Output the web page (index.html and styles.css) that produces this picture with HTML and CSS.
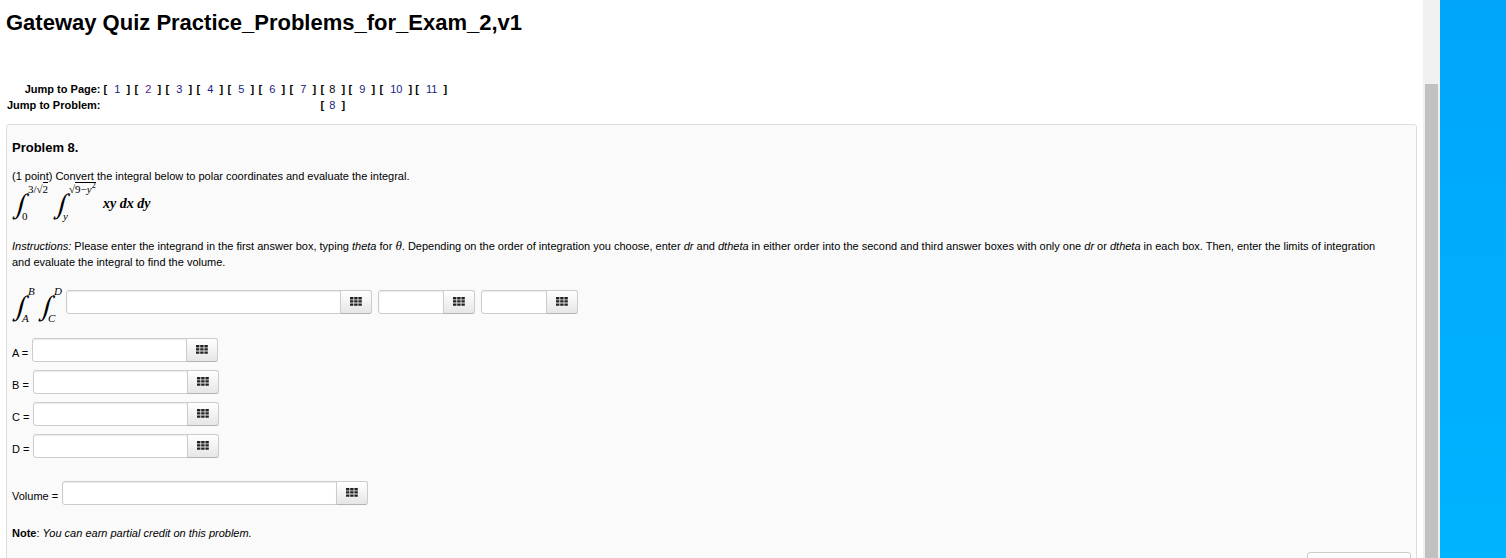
FILE: index.html
```
<!DOCTYPE html>
<html lang="en">

<head>
    <meta charset="UTF-8">
    <meta name="viewport" content="width=device-width, initial-scale=1.0">
    <title>Gateway Quiz Practice_Problems_for_Exam_2,v1</title>
    <link rel="stylesheet" href="styles.css">
</head>

<body>
    <!-- keypad icon shared by all the answer buttons -->
    <svg class="sprite" aria-hidden="true">
        <symbol id="grid" viewBox="0 0 12 9">
            <path d="M0 0h3.4v2.4H0zM4.2 0h3.4v2.4H4.2zM8.4 0h3.4v2.4H8.4zM0 3.2h3.4v2.4H0zM4.2 3.2h3.4v2.4H4.2zM8.4 3.2h3.4v2.4H8.4zM0 6.4h3.4v2.4H0zM4.2 6.4h3.4v2.4H4.2zM8.4 6.4h3.4v2.4H8.4z" />
        </symbol>
    </svg>

    <main class="page">
        <h1>Gateway Quiz Practice_Problems_for_Exam_2,v1</h1>

        <table class="jump">
            <tr>
                <th scope="row">Jump to Page:</th>
                <td>[ <a href="#p1">1</a> ]</td>
                <td>[ <a href="#p2" class="visited">2</a> ]</td>
                <td>[ <a href="#p3">3</a> ]</td>
                <td>[ <a href="#p4">4</a> ]</td>
                <td>[ <a href="#p5">5</a> ]</td>
                <td>[ <a href="#p6">6</a> ]</td>
                <td>[ <a href="#p7">7</a> ]</td>
                <td>[ <span class="current">8</span> ]</td>
                <td>[ <a href="#p9">9</a> ]</td>
                <td>[ <a href="#p10">10</a> ]</td>
                <td>[ <a href="#p11">11</a> ]</td>
            </tr>
            <tr>
                <th scope="row">Jump to Problem:</th>
                <td colspan="7"></td>
                <td>[ <a href="#prob8" class="current">8</a> ]</td>
            </tr>
        </table>

        <section class="problem" id="prob8">
            <h2>Problem 8.</h2>
            <p>(1 point) Convert the integral below to polar coordinates and evaluate the integral.</p>

            <div class="math">
                <span class="int">∫</span>
                <span class="limits wide"><span class="upper">3/√<span class="root">2</span></span><span>0</span></span>
                <span class="int">∫</span>
                <span class="limits wider"><span class="upper">√<span class="root">9−<i>y</i><sup>2</sup></span></span><i>y</i></span>
                <i class="integrand">xy dx dy</i>
            </div>

            <p class="instructions"><i>Instructions:</i> Please enter the integrand in the first answer box, typing
                <i>theta</i> for <i class="theta">θ</i>. Depending on the order of integration you choose, enter
                <i>dr</i> and <i>dtheta</i> in either order into the second and third answer boxes with only one
                <i>dr</i> or <i>dtheta</i> in each box. Then, enter the limits of integration and evaluate the integral
                to find the volume.</p>

            <div class="answers">
                <div class="math">
                    <span class="int">∫</span>
                    <span class="limits"><i class="upper">B</i><i>A</i></span>
                    <span class="int">∫</span>
                    <span class="limits"><i class="upper">D</i><i>C</i></span>
                </div>
                <div class="answer large">
                    <input type="text" aria-label="Integrand">
                    <button type="button" aria-label="Open editor"><svg><use href="#grid" /></svg></button>
                </div>
                <div class="answer small">
                    <input type="text" aria-label="First differential">
                    <button type="button" aria-label="Open editor"><svg><use href="#grid" /></svg></button>
                </div>
                <div class="answer small">
                    <input type="text" aria-label="Second differential">
                    <button type="button" aria-label="Open editor"><svg><use href="#grid" /></svg></button>
                </div>
            </div>

            <div class="row">
                <label for="ansA">A =</label>
                <div class="answer">
                    <input type="text" id="ansA">
                    <button type="button" aria-label="Open editor"><svg><use href="#grid" /></svg></button>
                </div>
            </div>
            <div class="row">
                <label for="ansB">B =</label>
                <div class="answer">
                    <input type="text" id="ansB">
                    <button type="button" aria-label="Open editor"><svg><use href="#grid" /></svg></button>
                </div>
            </div>
            <div class="row">
                <label for="ansC">C =</label>
                <div class="answer">
                    <input type="text" id="ansC">
                    <button type="button" aria-label="Open editor"><svg><use href="#grid" /></svg></button>
                </div>
            </div>
            <div class="row">
                <label for="ansD">D =</label>
                <div class="answer">
                    <input type="text" id="ansD">
                    <button type="button" aria-label="Open editor"><svg><use href="#grid" /></svg></button>
                </div>
            </div>
            <div class="row volume">
                <label for="ansV">Volume =</label>
                <div class="answer large">
                    <input type="text" id="ansV">
                    <button type="button" aria-label="Open editor"><svg><use href="#grid" /></svg></button>
                </div>
            </div>

            <p class="note"><b>Note</b>: <i>You can earn partial credit on this problem.</i></p>

            <div class="actions">
                <button type="button" class="preview" aria-label="Preview"></button>
            </div>
        </section>
    </main>

    <div class="scrollbar">
        <div class="thumb"></div>
    </div>
    <div class="desktop"></div>
</body>

</html>
```
FILE: styles.css
```
* {
    box-sizing: border-box;
}

body {
    margin: 0;
    height: 100vh;
    display: flex;
    overflow: hidden;
    background-color: #fff;
    color: #000;
    font-family: "Liberation Sans", Arial, sans-serif;
    font-size: 11px;
    line-height: 16px;
}

.sprite {
    display: none;
}

.page {
    flex: 1;
    min-width: 0;
    overflow: hidden;
    padding: 9px 6px 0;
}

h1 {
    margin: 0 0 44px;
    font-size: 22px;
    line-height: 28px;
}

h2 {
    margin: 0 0 12px;
    font-size: 13px;
    line-height: 16px;
}

p {
    margin: 0;
}

a {
    color: #1a1a80;
    text-decoration: none;
}

/* page navigation */
.jump {
    border-collapse: collapse;
    font-weight: bold;
    margin-bottom: 11px;
}

.jump th {
    padding: 0 2px 0 1px;
    text-align: right;
}

.jump td {
    min-width: 31px;
    padding: 0 2px 0 1px;
    white-space: nowrap;
}

.jump td:nth-child(9),
.jump td:nth-child(3):last-child {
    min-width: 28px;
}

.jump a,
.jump span {
    font-weight: normal;
    padding: 0 3px 0 4px;
}

.jump .current {
    padding: 0 3px 0 2px;
}

.jump .visited {
    color: #551a8b;
}

/* problem box */
.problem {
    border: 1px solid #ddd;
    border-radius: 3px;
    background-color: #fafafa;
    padding: 15px 5px 40px;
}

.math {
    display: flex;
    height: 40px;
    font-family: "Liberation Serif", "Times New Roman", serif;
}

.int {
    width: 10px;
    font-family: "DejaVu Math TeX Gyre", "Liberation Serif", serif;
    font-size: 24px;
    font-style: italic;
    line-height: 44px;
}

.limits {
    display: flex;
    flex-direction: column;
    justify-content: space-between;
    width: 16px;
    height: 38px;
    font-size: 11px;
    line-height: 11px;
    white-space: nowrap;
}

.limits.wide {
    width: 31px;
}

.limits.wider {
    width: 40px;
}

.upper {
    padding-left: 6px;
}

.root {
    border-top: 1px solid #000;
}

sup {
    font-size: 8px;
    line-height: 0;
}

.integrand {
    font-size: 14px;
    font-weight: bold;
    line-height: 40px;
}

.instructions {
    margin: 14px 0 16px;
    padding-right: 20px;
}

.theta {
    font-family: "Liberation Serif", "Times New Roman", serif;
    font-size: 13px;
    line-height: 1;
}

/* answer boxes */
.answers {
    display: flex;
    margin-bottom: 12px;
}

.answer {
    display: flex;
    width: 186px;
    height: 24px;
}

.answer.large {
    width: 306px;
}

.answer.small {
    width: 97px;
}

.answers .answer {
    margin: 4px 0 0 2px;
}

.answers .small {
    margin-left: 6px;
}

.answer input {
    flex: 1;
    min-width: 0;
    border: 1px solid #ccc;
    border-radius: 3px 0 0 3px;
    background-color: #fff;
    box-shadow: inset 0 1px 1px rgba(0, 0, 0, 0.08);
    padding: 0 4px;
    font-size: 11px;
}

.answer button {
    display: flex;
    align-items: center;
    justify-content: center;
    width: 32px;
    margin-left: -1px;
    border: 1px solid #ccc;
    border-bottom-color: #b3b3b3;
    border-radius: 0 3px 3px 0;
    background: linear-gradient(#fff, #e6e6e6);
    padding: 0 0 1px;
}

.answer svg {
    width: 12px;
    height: 9px;
    fill: #222;
}

.row {
    display: flex;
    gap: 4px;
    height: 32px;
}

.row label {
    padding-top: 7px;
}

.row.volume {
    margin-top: 15px;
}

.note {
    margin-top: 12px;
}

.actions {
    display: flex;
    justify-content: flex-end;
    margin-top: 11px;
}

.preview {
    width: 104px;
    height: 26px;
    border: 1px solid #ccc;
    border-radius: 3px;
    background: linear-gradient(#fff, #e6e6e6);
}

/* window edge */
.scrollbar {
    width: 17px;
    padding: 84px 2px 0;
    background-color: #f0f0f0;
}

.thumb {
    height: 100%;
    background-color: #c1c1c1;
}

.desktop {
    width: 66px;
    background: linear-gradient(#00a5fa, #00b4ff);
}
```
